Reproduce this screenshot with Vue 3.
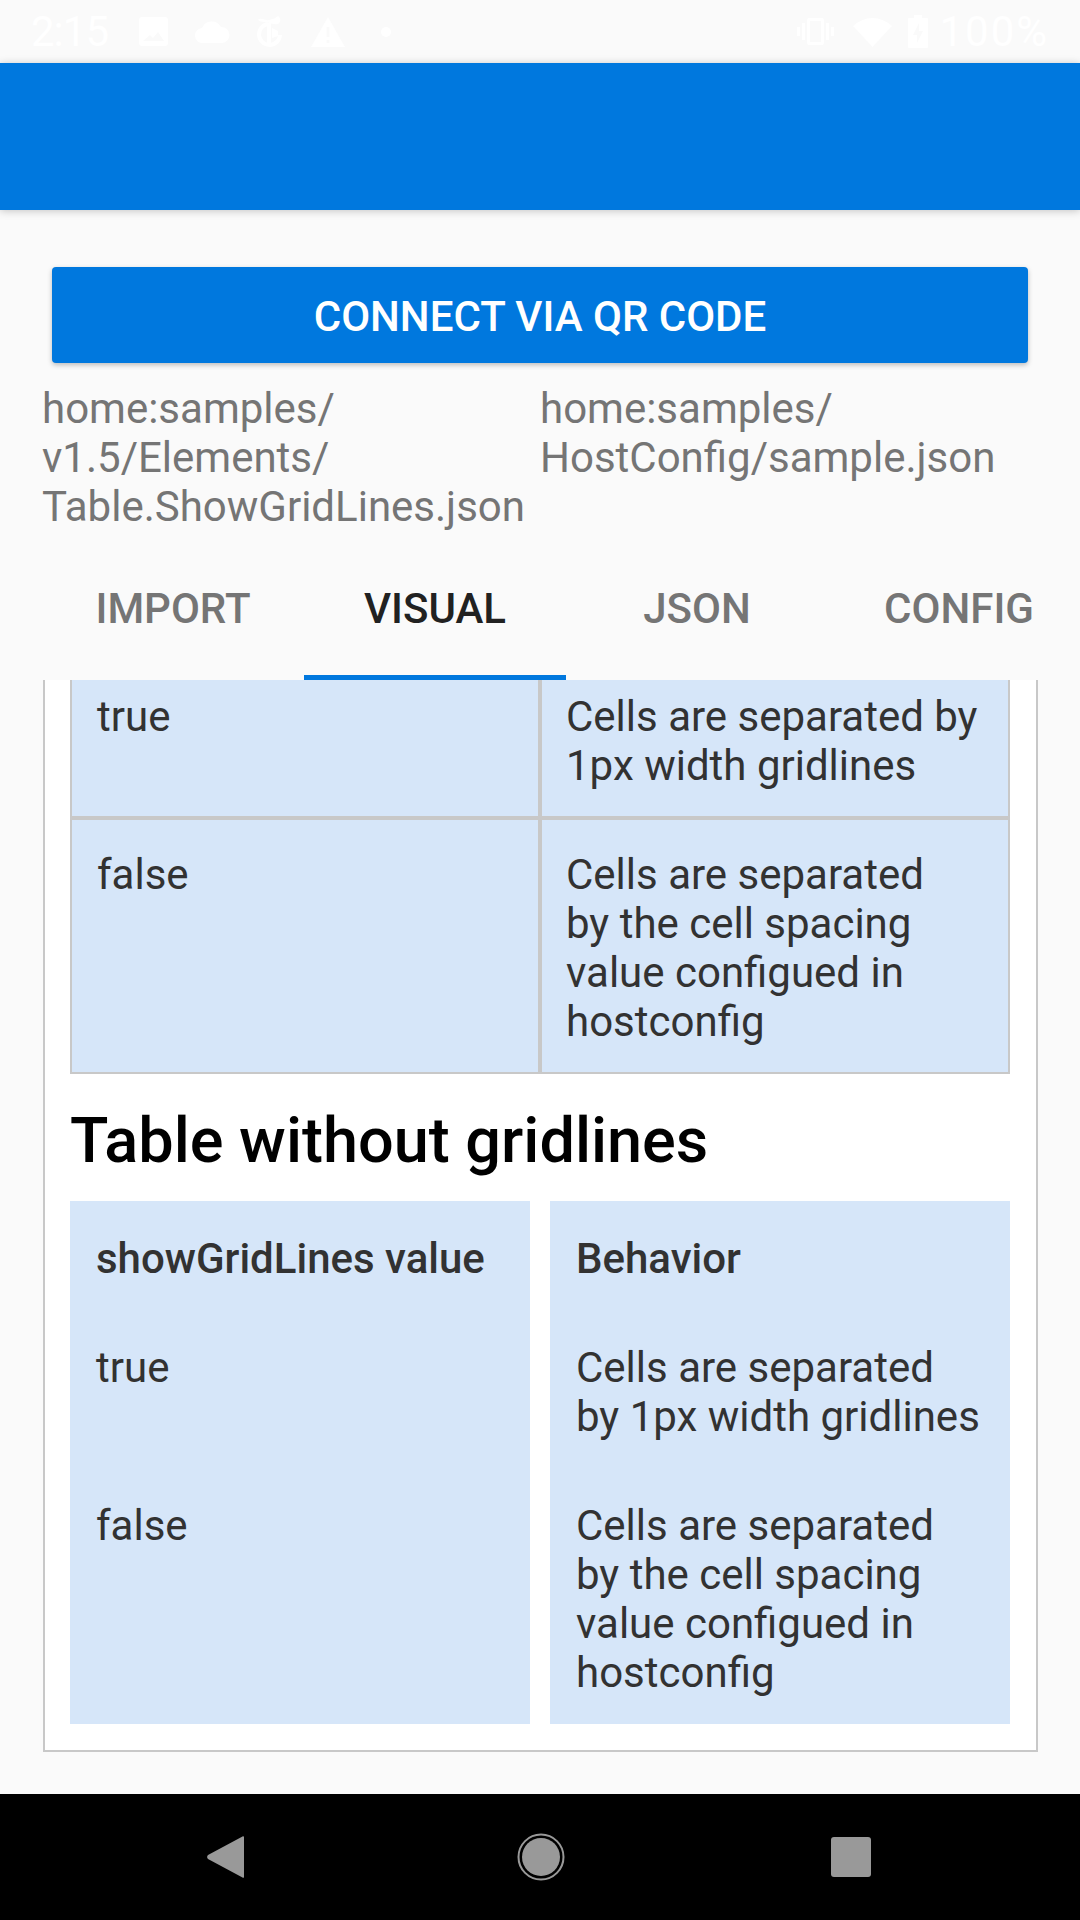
<template>
  <div class="screen">
    <div class="status-bar">
      <span class="clock">2:15</span>
      <svg class="ic-image" width="29" height="29" viewBox="0 0 29 29">
        <path d="M3 0h23a3 3 0 0 1 3 3v23a3 3 0 0 1-3 3H3a3 3 0 0 1-3-3V3a3 3 0 0 1 3-3zM4 24h21l-6-9-5 6-3-3z" fill="#fff" fill-rule="evenodd" />
      </svg>
      <svg class="ic-cloud" width="35" height="23" viewBox="0 0 35 23">
        <path d="M8 23a7.500 7.500 0 0 1-1-15A10.500 10.500 0 0 1 26 7a8 8 0 0 1 1 16z" fill="#fff" />
      </svg>
      <svg class="ic-nyt" width="25" height="32" viewBox="0 0 25 32">
        <path d="M11 8a10.500 10.500 0 1 0 12 11" fill="none" stroke="#fff" stroke-width="4" />
        <path d="M1 4c3-3 7 1 11 0s7-2 9-4c3 2 3 6 0 8-4 1-8-1-11-2-3 0-7 0-9-2z" fill="#fff" />
        <path d="M10 7h4v22h-4zM15 12l6 3v5l-6 2z" fill="#fff" />
      </svg>
      <svg class="ic-warn" width="34" height="30" viewBox="0 0 34 30">
        <path d="M17 0 34 30H0zM15.500 10v10h3V10zM15.500 23v3h3v-3z" fill="#fff" fill-rule="evenodd" />
      </svg>
      <span class="dot"></span>
      <span class="spacer"></span>
      <svg class="ic-vibrate" width="37" height="27" viewBox="0 0 37 27">
        <path d="M12 0h13a2 2 0 0 1 2 2v23a2 2 0 0 1-2 2H12a2 2 0 0 1-2-2V2a2 2 0 0 1 2-2zM13 3v21h11V3zM5 5h3v17H5zM29 5h3v17h-3zM0 9h3v9H0zM34 9h3v9h-3z" fill="#fff" fill-rule="evenodd" />
      </svg>
      <svg class="ic-wifi" width="39" height="32" viewBox="0 0 39 32">
        <path d="M19.500 32 0 11a28 28 0 0 1 39 0z" fill="#fff" />
      </svg>
      <svg class="ic-battery" width="20" height="33" viewBox="0 0 20 33">
        <path d="M6 0h8v3h5a1 1 0 0 1 1 1v28a1 1 0 0 1-1 1H1a1 1 0 0 1-1-1V4a1 1 0 0 1 1-1h5zM11 8l-6 12h4v8l6-12h-4z" fill="#fff" fill-rule="evenodd" />
      </svg>
      <span class="battery">100%</span>
    </div>

    <div class="app-bar"></div>

    <div class="content">
      <button class="connect-btn" type="button"><span>CONNECT VIA QR CODE</span></button>

      <div class="paths">
        <p>home:samples/<br />v1.5/Elements/<br />Table.ShowGridLines.json</p>
        <p>home:samples/<br />HostConfig/sample.json</p>
      </div>

      <div class="tabs">
        <div v-for="t in tabs" :key="t" :class="['tab', t === 'VISUAL' ? 'active' : '']">{{ t }}</div>
      </div>

      <div class="card">
        <div class="card-inner">
          <div class="grid-table">
            <template v-for="row in gridRows" :key="row[0]">
              <div class="grid-cell">{{ row[0] }}</div>
              <div class="grid-cell">{{ row[1] }}</div>
            </template>
          </div>

          <h2>Table without gridlines</h2>

          <div class="plain-table">
            <template v-for="(row, i) in plainRows" :key="row[0]">
              <div :class="['plain-cell', i === 0 ? 'head' : '', i === 2 ? 'last' : '']">{{ row[0] }}</div>
              <div :class="['plain-cell', i === 0 ? 'head' : '', i === 2 ? 'last' : '']">{{ row[1] }}</div>
            </template>
          </div>
        </div>
      </div>
    </div>

    <div class="nav-bar">
      <svg width="37" height="42" viewBox="0 0 37 42">
        <path d="M37 1v40c0 1-1 1-1.500.500L1 23a3 3 0 0 1 0-4L35.500.500C36 0 37 0 37 1z" fill="#999" />
      </svg>
      <svg width="48" height="48" viewBox="0 0 48 48">
        <circle cx="24" cy="24" r="22.500" fill="none" stroke="#999" stroke-width="2" />
        <circle cx="24" cy="24" r="19" fill="#999" />
      </svg>
      <svg width="40" height="40" viewBox="0 0 40 40">
        <rect width="40" height="40" rx="3" fill="#999" />
      </svg>
    </div>
  </div>
</template>

<script setup>
const tabs = ['IMPORT', 'VISUAL', 'JSON', 'CONFIG']

const separated = 'Cells are separated\nby the cell spacing\nvalue configued in\nhostconfig'

const gridRows = [
  ['true', 'Cells are separated by\n1px width gridlines'],
  ['false', separated]
]

const plainRows = [
  ['showGridLines value', 'Behavior'],
  ['true', 'Cells are separated\nby 1px width gridlines'],
  ['false', separated]
]
</script>

<style>
html, body { margin: 0; background: #fafafa; }
</style>

<style scoped>
.screen {
  width: 1080px;
  height: 1920px;
  display: flex;
  flex-direction: column;
  background: #fafafa;
  font-family: Roboto, "Liberation Sans", sans-serif;
  overflow: hidden;
}

.status-bar {
  height: 63px;
  flex: none;
  display: flex;
  align-items: center;
  padding: 0 31px;
  box-sizing: border-box;
  color: #fff;
  font-size: 42px;
  line-height: 49px;
}
.status-bar svg { flex: none; }
.clock { width: 108px; letter-spacing: -1px; }
.ic-cloud { margin-left: 27px; }
.ic-nyt { margin-left: 27px; }
.ic-warn { margin-left: 29px; }
.dot { width: 10px; height: 10px; border-radius: 50%; background: #fff; margin-left: 36px; }
.spacer { flex: 1; }
.ic-wifi { margin-left: 19px; margin-top: -2px; }
.ic-battery { margin-left: 16px; }
.battery { margin-left: 11px; letter-spacing: 2px; }

.app-bar {
  height: 147px;
  flex: none;
  background: #0078de;
  box-shadow: 0 1px 8px rgba(0, 0, 0, 0.22);
}

.content {
  flex: 1;
  min-height: 0;
  display: flex;
  flex-direction: column;
  padding: 57px 42px 42px 43px;
}

.connect-btn {
  flex: none;
  height: 96px;
  margin: 0 10px 0 9px;
  padding: 3px 0 0;
  border: none;
  border-radius: 4px;
  background: #0078de;
  color: #fff;
  font-family: inherit;
  font-size: 42px;
  font-weight: 500;
  box-shadow: 0 2px 5px rgba(0, 0, 0, 0.25);
}

.paths {
  flex: none;
  display: grid;
  grid-template-columns: 498px 1fr;
  margin: 21px 0 0 -1px;
  color: #757575;
  font-size: 42px;
  line-height: 49px;
}
.paths p { margin: 0; }

.tabs {
  flex: none;
  display: grid;
  grid-template-columns: repeat(4, 262px);
  margin: 35px 0 0 -1px;
}
.tab {
  height: 114px;
  padding-bottom: 24px;
  box-sizing: border-box;
  display: flex;
  justify-content: center;
  align-items: center;
  border-bottom: 5px solid transparent;
  color: #757575;
  font-size: 42px;
  font-weight: 500;
}
.tab.active {
  color: #212121;
  border-bottom-color: #0078de;
}

.card {
  flex: 1;
  min-height: 0;
  display: flex;
  flex-direction: column;
  justify-content: flex-end;
  overflow: hidden;
  background: #fff;
  border: 2px solid #c8c8c8;
  border-top: none;
}
.card-inner {
  flex: none;
  padding: 0 26px 26px 25px;
}

.grid-table {
  display: grid;
  grid-template-columns: 1fr 1fr;
}
.grid-cell {
  background: #d6e6f9;
  color: #323232;
  border: 2px solid #c8c8c8;
  padding: 26px 25px 26px;
  font-size: 42px;
  line-height: 49px;
  white-space: pre-line;
}
.grid-cell:nth-child(even) { padding-left: 24px; }
.grid-cell:nth-child(n+3) { padding-top: 30px; }

h2 {
  margin: 0;
  padding: 30px 0 23px;
  color: #000;
  font-size: 63px;
  font-weight: 500;
  line-height: 74px;
}

.plain-table {
  display: grid;
  grid-template-columns: 1fr 1fr;
  column-gap: 20px;
}
.plain-cell {
  background: #d6e6f9;
  color: #323232;
  padding: 30px 26px;
  font-size: 42px;
  line-height: 49px;
  white-space: pre-line;
}
.plain-cell.head { font-weight: 500; padding-top: 33px; }
.plain-cell.last { padding-bottom: 27px; }

.nav-bar {
  height: 126px;
  flex: none;
  background: #000;
  display: grid;
  grid-template-columns: 315px 315px 306px;
  justify-items: center;
  align-items: center;
  padding-left: 68px;
}
</style>
